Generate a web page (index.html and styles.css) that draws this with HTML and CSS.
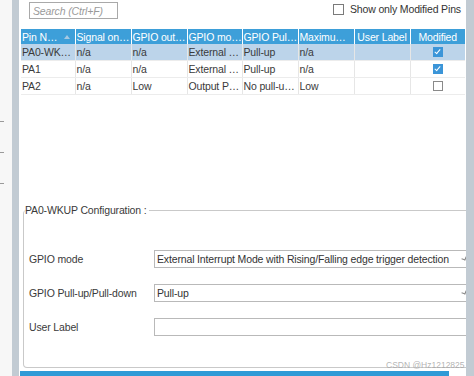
FILE: index.html
```html
<!DOCTYPE html>
<html lang="en">
<head>
    <meta charset="UTF-8">
    <title>Pin Configuration</title>
    <link rel="stylesheet" href="styles.css">
</head>
<body>
    <div class="window">
        <div class="side">
            <span class="tick"></span>
            <span class="tick"></span>
            <span class="tick"></span>
        </div>
        <div class="bar"></div>
        <div class="main">
            <div class="toolbar">
                <input class="search" type="text" placeholder="Search (Ctrl+F)">
                <label class="only-modified"><span class="box"></span>Show only Modified Pins</label>
            </div>

            <table class="pins">
                <colgroup>
                    <col style="width:54px"><col style="width:56px"><col style="width:56px"><col style="width:55px">
                    <col style="width:56px"><col style="width:56px"><col style="width:56px"><col style="width:55px">
                </colgroup>
                <thead>
                    <tr>
                        <th>Pin N… <span class="sort"></span></th>
                        <th>Signal on…</th>
                        <th>GPIO out…</th>
                        <th>GPIO mo…</th>
                        <th>GPIO Pul…</th>
                        <th>Maximu…</th>
                        <th class="center">User Label</th>
                        <th class="center">Modified</th>
                    </tr>
                </thead>
                <tbody>
                    <tr class="selected">
                        <td>PA0-WK…</td><td>n/a</td><td>n/a</td><td>External …</td>
                        <td>Pull-up</td><td>n/a</td><td></td><td class="center"><span class="check on"></span></td>
                    </tr>
                    <tr>
                        <td>PA1</td><td>n/a</td><td>n/a</td><td>External …</td>
                        <td>Pull-up</td><td>n/a</td><td></td><td class="center"><span class="check on"></span></td>
                    </tr>
                    <tr>
                        <td>PA2</td><td>n/a</td><td>Low</td><td>Output P…</td>
                        <td>No pull-u…</td><td>Low</td><td></td><td class="center"><span class="check"></span></td>
                    </tr>
                </tbody>
            </table>

            <section class="config">
                <div class="config-title"><span>PA0-WKUP Configuration :</span></div>
                <div class="form">
                    <span class="label">GPIO mode</span>
                    <div class="field">External Interrupt Mode with Rising/Falling edge trigger detection<span class="arrow"></span></div>
                    <span class="label">GPIO Pull-up/Pull-down</span>
                    <div class="field">Pull-up<span class="arrow"></span></div>
                    <span class="label">User Label</span>
                    <div class="field"></div>
                </div>
            </section>

            <div class="status"></div>
        </div>
        <div class="bar bar-right"></div>
    </div>
    <div class="watermark">CSDN @Hz1212825</div>
</body>
</html>
```

FILE: styles.css
```css
body {
    margin: 0;
    font-family: "Liberation Sans", Arial, sans-serif;
    font-size: 10.5px;
    letter-spacing: -0.15px;
    color: #3a3a3a;
    background: #ffffff;
}
.window {
    display: flex;
    height: 376px;
    width: 474px;
    overflow: hidden;
    position: relative;
}
.side {
    width: 12px;
    background: #f7f7f7;
    display: flex;
    flex-direction: column;
    padding-top: 121px;
    gap: 30px;
    box-sizing: border-box;
}
.tick {
    display: block;
    width: 4px;
    height: 1px;
    background: #9a9a9a;
}
.bar {
    width: 7px;
    background: #c2cbd3;
    flex-shrink: 0;
}
.bar-right {
    width: 8px;
}
.main {
    width: 447px;
    display: flex;
    flex-direction: column;
    overflow: hidden;
    background: #ffffff;
}
.toolbar {
    height: 29px;
    display: flex;
    align-items: flex-start;
    padding: 2px 0 0 10px;
    box-sizing: border-box;
    flex-shrink: 0;
}
.search {
    width: 89px;
    height: 17px;
    box-sizing: border-box;
    border: 1px solid #a9a9a9;
    padding: 0 3px;
    font-family: inherit;
    font-size: 10.5px;
    letter-spacing: -0.15px;
    outline: none;
}
.search::placeholder {
    color: #9a9a9a;
    font-style: italic;
}
.only-modified {
    margin-left: 215px;
    margin-top: 1px;
    display: flex;
    align-items: center;
    gap: 6px;
    white-space: nowrap;
    color: #333;
}
.box {
    width: 11px;
    height: 11px;
    box-sizing: border-box;
    border: 1px solid #7a7a7a;
    background: #fff;
}
.pins {
    margin-left: 2px;
    width: 444px;
    table-layout: fixed;
    border-collapse: collapse;
    flex-shrink: 0;
}
.pins th {
    background: #3d9fd9;
    color: #ffffff;
    font-weight: normal;
    text-align: left;
    height: 15px;
    padding: 0 1px;
    border-left: 1px solid #ffffff;
    white-space: nowrap;
    overflow: hidden;
}
.pins th:first-child {
    border-left: none;
}
.pins td {
    height: 16px;
    padding: 0 1px;
    border-left: 1px solid #e6e6e6;
    border-bottom: 1px solid #ececec;
    white-space: nowrap;
    overflow: hidden;
}
.pins td:first-child {
    border-left: none;
}
.pins .center {
    text-align: center;
}
.pins .selected td {
    background: #bcd4ea;
}
.sort {
    display: inline-block;
    margin-left: 4px;
    width: 0;
    height: 0;
    border-left: 3px solid transparent;
    border-right: 3px solid transparent;
    border-bottom: 4px solid #a6c8e2;
    vertical-align: 2px;
}
.check {
    display: inline-block;
    width: 10px;
    height: 10px;
    box-sizing: border-box;
    border: 1px solid #8a8a8a;
    background: #fff;
    vertical-align: -1px;
    position: relative;
}
.check.on {
    background: #3b95d8;
    border-color: #3b95d8;
}
.check.on::after {
    content: "";
    position: absolute;
    left: 2px;
    top: 0;
    width: 2px;
    height: 5px;
    border-right: 1.5px solid #fff;
    border-bottom: 1.5px solid #fff;
    transform: rotate(40deg);
}
.config {
    margin: 115px 0 0 4px;
    width: 462px;
    height: 158px;
    box-sizing: border-box;
    border: 1px solid #c9c9c9;
    border-top: none;
    border-radius: 0 0 4px 4px;
    padding: 0 0 0 5px;
    flex-shrink: 0;
}
.config-title {
    display: flex;
    align-items: center;
    height: 14px;
    margin: -7px 0 0 -6px;
    background: #fff;
    color: #3a3a3a;
}
.config-title::after {
    content: "";
    flex: 1;
    height: 1px;
    background: #c9c9c9;
    margin-left: 3px;
}
.config-title span {
    padding-left: 1px;
    border-left: 1px solid #c9c9c9;
    border-top-left-radius: 4px;
    margin-top: 7px;
    height: 7px;
    line-height: 0;
}
.form {
    display: grid;
    grid-template-columns: 125px 1fr;
    grid-auto-rows: 18px;
    row-gap: 16px;
    align-items: center;
    padding-top: 33px;
}
.field {
    height: 18px;
    box-sizing: border-box;
    border: 1px solid #b9b9b9;
    background: #fff;
    padding: 0 2px;
    display: flex;
    align-items: center;
    justify-content: space-between;
    white-space: nowrap;
    color: #333;
    width: 318px;
}
.arrow {
    width: 3px;
    height: 3px;
    border-right: 1px solid #888;
    border-bottom: 1px solid #888;
    transform: rotate(20deg);
    margin-right: 3px;
    margin-bottom: 3px;
}
.status {
    margin-top: 3px;
    margin-left: 1px;
    width: 429px;
    height: 6px;
    background: #2f9ad6;
    flex-shrink: 0;
}
.watermark {
    position: absolute;
    left: 386px;
    top: 360px;
    font-size: 8.5px;
    white-space: nowrap;
    color: rgba(165, 165, 165, 0.85);
    letter-spacing: 0;
}
```
